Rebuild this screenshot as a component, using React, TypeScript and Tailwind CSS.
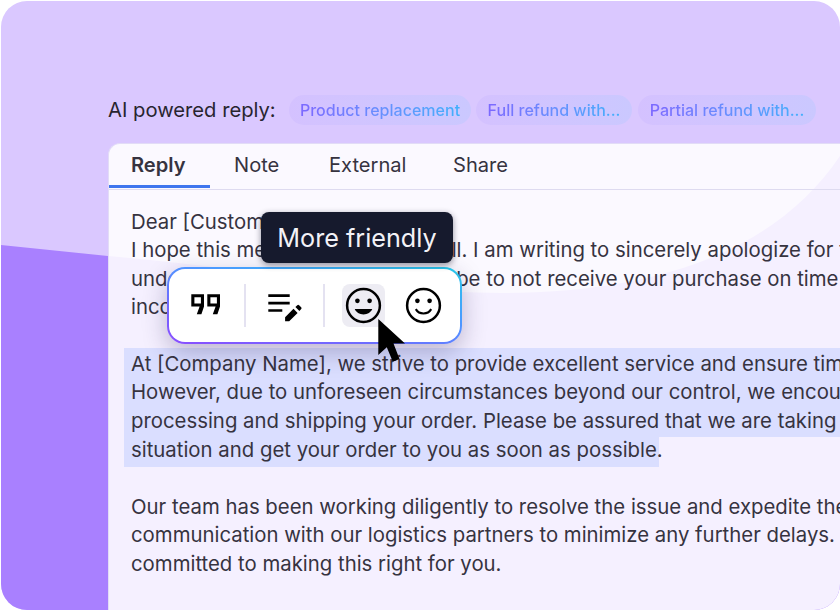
import React from "react";

const firstParagraph = [
  "Dear [Customer Name],",
  "I hope this message finds you well. I am writing to sincerely apologize for the delay",
  "understand how frustrating it can be to not receive your purchase on time and",
  "inconvenience this has caused.",
];

const highlighted = [
  "At [Company Name], we strive to provide excellent service and ensure timely",
  "However, due to unforeseen circumstances beyond our control, we encountered",
  "processing and shipping your order. Please be assured that we are taking all",
];

const closing = [
  "Our team has been working diligently to resolve the issue and expedite the",
  "communication with our logistics partners to minimize any further delays.",
  "committed to making this right for you.",
];

function Chip({ label, className }: { label: string; className: string }) {
  return (
    <div
      className={`flex h-[30px] items-center justify-center rounded-full bg-gradient-to-r from-[#8367ff]/7 to-[#59c8ff]/12 ${className}`}
    >
      <span className="bg-gradient-to-r from-[#7c68ff] to-[#3fb0fc] bg-clip-text pt-px text-[16.05px] font-medium whitespace-nowrap text-transparent">
        {label}
      </span>
    </div>
  );
}

function Lines({ lines }: { lines: string[] }) {
  return (
    <>
      {lines.map((line) => (
        <p key={line} className="whitespace-nowrap">
          {line}
        </p>
      ))}
    </>
  );
}

function Toolbar() {
  return (
    <div className="absolute top-[267px] left-[167px] h-[77px] w-[295px] rounded-[18px] bg-[linear-gradient(12deg,#8a4dff_0%,#6f6bff_30%,#4a9bff_62%,#27c8e8_100%)] p-[2px] shadow-[0_8px_24px_rgba(40,30,80,0.28)]">
      <div className="flex h-full w-full items-center rounded-[16px] bg-white">
        <svg className="ml-[17px] shrink-0" width="40" height="43" viewBox="186 284 40 43">
          <path
            fillRule="evenodd"
            d="M191.3 294.3H204V306.5L201.4 314.3H196.8L199.6 306.5H191.3ZM194.4 297.3V303.5H200.9V297.3ZM207.3 294.3H220V306.5L217.4 314.3H212.8L215.6 306.5H207.3ZM210.4 297.3V303.5H216.9V297.3Z"
          />
        </svg>
        <div className="ml-[18px] h-[43px] w-[2px] bg-[#e4e2f1]" />
        <svg className="ml-[16px] shrink-0" width="43" height="43" viewBox="262 284 43 43">
          <path d="M268.3 294.3H289.7V296.9H268.3ZM268.3 301.8H289.7V304.4H268.3ZM268.3 309.2H282.3V311.8H268.3Z" />
          <path d="M285.1 321.3V317.2L293.5 308.8L297.6 312.9L289.2 321.3ZM295.4 307L297.3 305.2Q298.2 304.4 299.1 305.2L301.2 307.3Q302 308.2 301.2 309.1L299.4 311Z" />
        </svg>
        <div className="ml-[18px] h-[43px] w-[2px] bg-[#e4e2f1]" />
        <div className="ml-[17px] flex h-[43px] w-[43px] items-center justify-center rounded-[8px] bg-[#edecf3]">
          <svg width="43" height="43" viewBox="0 0 24 24">
            <circle cx="12" cy="12" r="9.15" fill="none" stroke="#000" strokeWidth="1.4" />
            <circle cx="8.6" cy="9.4" r="1.3" />
            <circle cx="15.4" cy="9.4" r="1.3" />
            <path d="M12 17c2.33 0 4.1-1.2 4.9-3H7.1c.8 1.8 2.57 3 4.9 3z" />
          </svg>
        </div>
        <svg className="ml-[17px] shrink-0" width="43" height="43" viewBox="0 0 24 24">
          <circle cx="12" cy="12" r="9.15" fill="none" stroke="#000" strokeWidth="1.4" />
          <circle cx="8.6" cy="9.4" r="1.3" />
          <circle cx="15.4" cy="9.4" r="1.3" />
          <path d="M7.7 14a5 5 0 0 0 8.6 0" fill="none" stroke="#000" strokeWidth="1.2" />
        </svg>
      </div>
    </div>
  );
}

export default function App() {
  return (
    <div className="h-[610px] w-[840px] overflow-hidden bg-white pt-px pl-px font-['Inter',sans-serif] text-[#36333f]">
      <div className="relative h-[609px] w-[839px] overflow-hidden rounded-[26px] bg-[#dac8ff]">
        <svg className="absolute inset-0" width="839" height="609" viewBox="1 1 839 609">
          <path d="M0 245L108 256C250 269 400 293 500 293C640 293 770 260 840 156V610H0Z" fill="#a980ff" />
        </svg>
        <div className="relative pt-[94px] pl-[107px]">
          <div className="flex h-[30px] items-center">
            <div className="w-[181px] pt-px text-[20.2px] whitespace-nowrap text-[#28252f]">AI powered reply:</div>
            <Chip label="Product replacement" className="w-[182px]" />
            <Chip label="Full refund with..." className="ml-[5px] w-[156px]" />
            <Chip label="Partial refund with..." className="ml-[6px] w-[178px]" />
          </div>
          <div className="mt-[18px] h-[480px] w-[732px] overflow-hidden rounded-tl-[12px] border border-r-0 border-[#e2dcf7] bg-white/88">
            <div className="flex h-[46px] border-b border-[#dedbf0] text-[20.1px] leading-[42px]">
              <div className="h-[44px] w-[101px] border-b-[3px] border-[#3f76ee] pl-[22px] font-semibold">Reply</div>
              <div className="ml-[24px] w-[95px]">Note</div>
              <div className="w-[124px]">External</div>
              <div>Share</div>
            </div>
            <div className="pt-[18px] pl-[22px] text-[20.35px] leading-[28.45px]">
              <Lines lines={firstParagraph} />
              <div className="mt-[26px] -ml-[7px] h-[118px]">
                <div className="h-[89px] bg-[#dadeff] pt-[2px] pl-[7px]">
                  <Lines lines={highlighted} />
                </div>
                <p className="h-[30px] w-[535px] bg-[#dadeff] pl-[7px] leading-[25px] whitespace-nowrap">
                  situation and get your order to you as soon as possible.
                </p>
              </div>
              <div className="pt-[27px]">
                <Lines lines={closing} />
              </div>
            </div>
          </div>
        </div>
      </div>
      <Toolbar />
      <div className="absolute top-[212px] left-[261px] flex h-[51px] w-[192px] items-center justify-center rounded-[8px] bg-[#161a2d] pt-[3px] text-[25.2px] whitespace-nowrap text-[#f3f2f7] shadow-[0_2px_6px_rgba(20,20,40,0.45)]">
        More friendly
      </div>
      <svg className="absolute top-[317px] left-[376px]" width="32" height="46" viewBox="0 0 32 46">
        <path d="M2.3 2V38L10.8 30.2L16.8 44.7L23.5 42L17.5 26.6H29Z" />
      </svg>
    </div>
  );
}
